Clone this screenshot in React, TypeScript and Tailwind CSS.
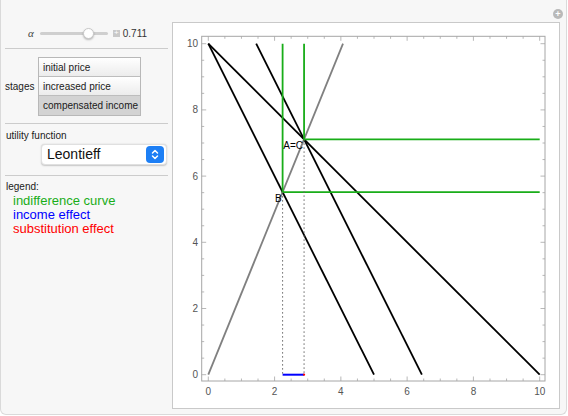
import * as React from "react";

// Leontief demand for alpha = 0.711: consumption ray y = r x
const alpha = 0.711;
const r = alpha / (1 - alpha);
const A = { x: 10 / (1 + r), y: (10 * r) / (1 + r) };
const B = { x: 10 / (2 + r), y: (10 * r) / (2 + r) };
const m = 2 * A.x + A.y;

const X = (x: number) => 35.3 + 33.14 * x;
const Y = (y: number) => 351.7 - 33.1 * y;

const frame = { left: 28.7, top: 13.3, right: 372, bottom: 358 };

const stages = ["initial price", "increased price", "compensated income"];

function Plot() {
  const steps = Array.from({ length: 21 }, (_, i) => i * 0.5);
  const seg = (x1: number, y1: number, x2: number, y2: number) =>
    `M${X(x1)} ${Y(y1)}L${X(x2)} ${Y(y2)}`;

  return (
    <svg width="386" height="385" viewBox="0 0 386 385" className="block">
      <rect
        x={frame.left}
        y={frame.top}
        width={frame.right - frame.left}
        height={frame.bottom - frame.top}
        fill="none"
        stroke="#a6a6a6"
        strokeWidth="1"
      />
      {steps.map((v) => {
        const major = v % 2 === 0;
        const len = major ? 4.5 : 2.5;
        return (
          <g key={v} stroke="#a6a6a6" strokeWidth="0.8">
            <line x1={X(v)} y1={frame.bottom} x2={X(v)} y2={frame.bottom - len} />
            <line x1={X(v)} y1={frame.top} x2={X(v)} y2={frame.top + len} />
            <line x1={frame.left} y1={Y(v)} x2={frame.left + len} y2={Y(v)} />
            <line x1={frame.right} y1={Y(v)} x2={frame.right - len} y2={Y(v)} />
          </g>
        );
      })}
      <g fontFamily="'Liberation Sans', Arial, sans-serif" fontSize="10" fill="#555">
        {[0, 2, 4, 6, 8, 10].map((v) => (
          <text key={`x${v}`} x={X(v)} y={371.5} textAnchor="middle">
            {v}
          </text>
        ))}
        {[0, 2, 4, 6, 8, 10].map((v) => (
          <text key={`y${v}`} x={25} y={Y(v) + 3.5} textAnchor="end">
            {v}
          </text>
        ))}
      </g>

      <path d={seg(0, 0, 10 / r, 10)} stroke="#808080" strokeWidth="1.8" fill="none" />
      <g stroke="#000" strokeWidth="1.8" fill="none">
        <path d={seg(0, 10, 10, 0)} />
        <path d={seg(0, 10, 5, 0)} />
        <path d={seg((m - 10) / 2, 10, m / 2, 0)} />
      </g>
      <g stroke="#19ad19" strokeWidth="1.8" fill="none">
        <path d={`M${X(A.x)} ${Y(10)}L${X(A.x)} ${Y(A.y)}L${X(10)} ${Y(A.y)}`} />
        <path d={`M${X(B.x)} ${Y(10)}L${X(B.x)} ${Y(B.y)}L${X(10)} ${Y(B.y)}`} />
      </g>
      <g stroke="#666" strokeWidth="1" strokeDasharray="1.5 2.5" fill="none">
        <path d={seg(A.x, A.y, A.x, 0)} />
        <path d={seg(B.x, B.y, B.x, 0)} />
      </g>
      <path d={seg(B.x, 0, A.x, 0)} stroke="#0000ff" strokeWidth="2" />
      <circle cx={X(A.x)} cy={Y(0)} r="1.1" fill="#ff0000" />

      <g fontFamily="'Liberation Sans', Arial, sans-serif" fontSize="10" fill="#000">
        <text x={X(A.x) - 1} y={Y(A.y) + 9.5} textAnchor="end">
          A=C
        </text>
        <text x={X(B.x) - 1} y={Y(B.y) + 9.5} textAnchor="end">
          B
        </text>
      </g>
    </svg>
  );
}

export default function App() {
  return (
    <div className="h-[416px] w-[568px] bg-white font-['Liberation_Sans',Arial,sans-serif] text-[#1a1a1a]">
      <div className="relative flex h-[415px] w-[567px] rounded-b-[6px] border-x border-b border-[#dadada] bg-[#f7f7f7]">
        <div className="flex w-[171px] flex-col pt-[23px]">
          <div className="flex h-[20px] items-center">
            <span className="ml-[27px] font-['Liberation_Serif',serif] text-[11px] italic text-[#444]">
              α
            </span>
            <div className="relative ml-[6px] h-[3px] w-[68px] rounded-full bg-[#cfcfcf]">
              <span className="absolute left-[43px] top-[-4px] h-[11px] w-[11px] rounded-full border border-[#c8c8c8] bg-white shadow-[0_1px_2px_rgba(0,0,0,0.25)]" />
            </div>
            <span className="ml-[5px] flex h-[7px] w-[7px] items-center justify-center bg-[#c9c9c9] text-[8px] leading-none text-white">
              +
            </span>
            <span className="ml-[3px] text-[10px] text-[#333]">0.711</span>
          </div>

          <div className="ml-[4px] mt-[5px] h-px w-[163px] bg-[#cccccc]" />

          <div className="mt-[8px] flex items-center">
            <span className="w-[37px] pl-[4px] text-[10px]">stages</span>
            <div className="flex w-[103px] flex-col divide-y divide-[#bdbdbd] border border-[#b8b8b8]">
              {stages.map((s, i) => (
                <div
                  key={s}
                  className={
                    i === 2
                      ? "flex h-[19px] items-center bg-[#d3d3d3] pl-[4px] text-[10px]"
                      : "flex h-[19px] items-center bg-gradient-to-b from-white to-[#ececec] pl-[4px] text-[10px]"
                  }
                >
                  {s}
                </div>
              ))}
            </div>
          </div>

          <div className="ml-[4px] mt-[7px] h-px w-[163px] bg-[#cccccc]" />

          <div className="ml-[5px] mt-[6px] text-[10px] leading-[12px]">utility function</div>

          <div className="ml-[40px] mt-[2px] flex h-[21px] w-[126px] items-center justify-between rounded-[4px] border border-[#e0e0e0] bg-white shadow-[0_0.5px_1.5px_rgba(0,0,0,0.2)]">
            <span className="pl-[5px] text-[14px] text-[#111]">Leontieff</span>
            <span className="mr-[2px] flex h-[17px] w-[18px] items-center justify-center rounded-[4px] bg-[#1d7ff5]">
              <svg width="10" height="13" viewBox="0 0 10 13" fill="none" stroke="white" strokeWidth="1.5" strokeLinecap="round" strokeLinejoin="round">
                <path d="M2.5 5L5 2.5L7.5 5" />
                <path d="M2.5 8L5 10.5L7.5 8" />
              </svg>
            </span>
          </div>

          <div className="ml-[4px] mt-[10px] h-px w-[163px] bg-[#cccccc]" />

          <div className="ml-[5px] mt-[5px] text-[10px] leading-[12px]">legend:</div>
          <div className="ml-[12px] mt-px flex flex-col text-[13px] leading-[14px]">
            <span className="text-[#19ad19]">indifference curve</span>
            <span className="text-[#0000ff]">income effect</span>
            <span className="text-[#ff0000]">substitution effect</span>
          </div>
        </div>

        <div className="mt-[22px] h-[387px] w-[388px] border border-[#c9c9c9] bg-white">
          <Plot />
        </div>

        <span className="absolute right-[3px] top-[9px] flex h-[10px] w-[10px] items-center justify-center rounded-full bg-[#b9b9b9] text-[9px] font-bold leading-none text-white">
          +
        </span>
      </div>
    </div>
  );
}
